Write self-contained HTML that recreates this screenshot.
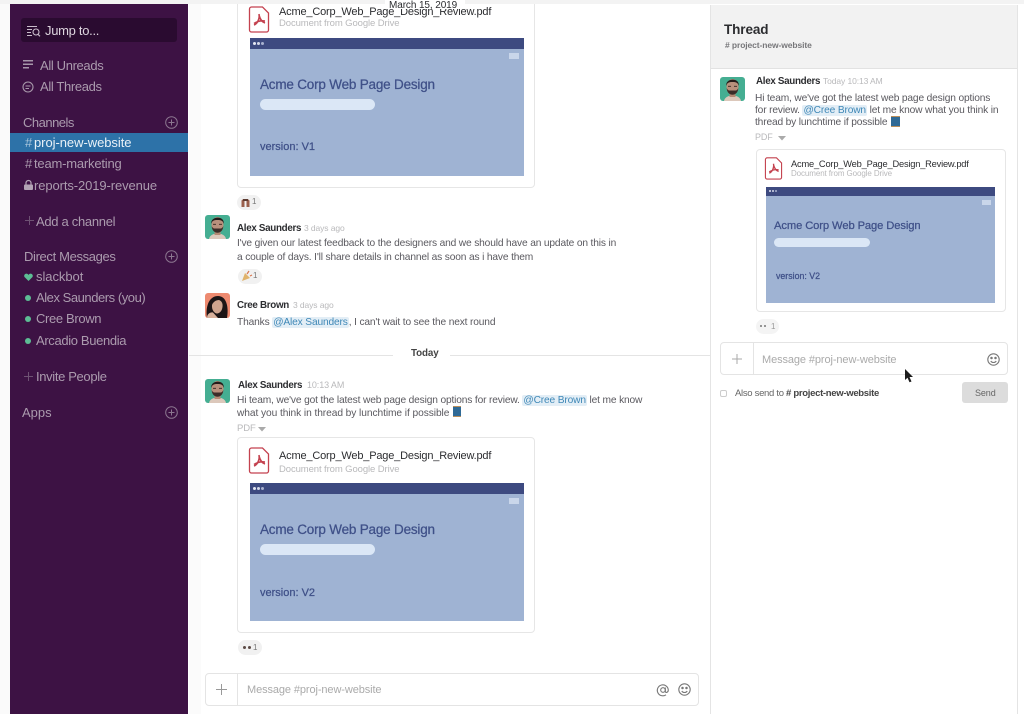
<!DOCTYPE html>
<html lang="en"><head><meta charset="utf-8"><title>Thread</title>
<style>
html,body{margin:0;padding:0;background:#fff}
body{width:1024px;height:714px;overflow:hidden;position:relative;font-family:"Liberation Sans",sans-serif;filter:blur(.3px)}
.a,.t{position:absolute}
.t{white-space:nowrap;line-height:1;font-size:11.5px;color:#5a595f;letter-spacing:-.1px}
.s{color:#ab9bae;font-size:13px;letter-spacing:-.35px}
.b{font-weight:700;color:#2c2d30;font-size:9.8px;letter-spacing:-.3px}
.g{color:#b9b9bb;font-size:9.5px}
.ms{font-size:10.2px;letter-spacing:-.15px}
.ti{font-size:11px;letter-spacing:-.18px;color:#2c2d30}
.m{background:#e3eef6;color:#3f88b7;border-radius:2px;padding:0 1px}
.card{position:absolute;background:#fff;border:1px solid #e6e6e6;border-radius:4px;box-sizing:border-box}
.pv{position:absolute;background:#9fb3d3}
.bar{position:absolute;left:0;right:0;top:0;background:#3d4a80}
.h{position:absolute;color:#3f5088;font-weight:400;white-space:nowrap;line-height:1;-webkit-text-stroke:.25px #3f5088}
.pill{position:absolute;background:#dbe7f6;border-radius:6px}
.re{position:absolute;background:#f1f1f1;border-radius:8px;height:15px}
.dot{position:absolute;width:6px;height:6px;border-radius:50%;background:#5dbd95}
svg{position:absolute;overflow:visible}
</style></head><body>
<svg width="0" height="0" style="position:absolute"><defs>
<g id="alex"><rect width="25" height="24" rx="3" fill="#45ae92"/><path d="M4 24c.5-3 3-4.500 5-5h7c2 .5 4.500 2 5 5z" fill="#dcc8bb"/><rect x="9.500" y="15" width="6" height="5" fill="#b58a74"/><ellipse cx="12.500" cy="10" rx="6" ry="8" fill="#b8907c"/><path d="M6.300 9C5 1 20 0 18.700 9 18 5.500 16 5 12.500 5S7 5.500 6.300 9z" fill="#241c1a"/><path d="M6.700 11c.3 9 11.300 9 11.600 0-1 2.500-2.500 2.500-3 2.500h-5.600c-.5 0-2 0-3-2.500z" fill="#3b2d28"/><path d="M8 9.300h3M14 9.300h3" stroke="#33261f" stroke-width=".9"/></g>
<g id="cree"><rect width="25" height="25" rx="3" fill="#ed8a70"/><path d="M2 25C0 12 5 3 13 3c8 0 11 10 9 22z" fill="#1c1516"/><path d="M7 12c1-3 4-5 7-5 3 1 4 4 3.500 7-.5 4-3 6.500-5.500 6.500S6.500 17 7 12z" fill="#cfa48e"/><path d="M2 25c0-4 3-6 6-5.500l5 5.500z" fill="#d9b19c"/></g>
<g id="pdf"><path d="M2.500 1h11l6 6v17a2 2 0 0 1-2 2H2.500a2 2 0 0 1-2-2V3a2 2 0 0 1 2-2z" fill="#fff" stroke="#c4424f" stroke-width="1.300"/><path d="M5 19c3-1 6-6 5-11M10 9c1 4 3 7 6 8M5 17.500c3-2 7-3 11-2.500" fill="none" stroke="#c4424f" stroke-width="1.600"/></g>
</defs></svg>

<!-- page chrome -->
<div class="a" style="left:0;top:4px;width:10px;height:710px;background:#fafafa"></div>
<div class="a" style="left:189px;top:4px;width:12px;height:710px;background:#fbfbfb"></div>

<!-- top card -->
<div class="card" style="left:237px;top:-20px;width:298px;height:208px"></div>
<svg style="left:249px;top:6px" width="20" height="24"><use href="#pdf"/></svg>
<div class="t ti" style="left:279px;top:7px">Acme_Corp_Web_Page_Design_Review.pdf</div>
<div class="t g" style="left:279px;top:19px">Document from Google Drive</div>
<div class="pv" style="left:250px;top:38px;width:274px;height:138px"><div class="bar" style="height:11px"></div>
<div class="a" style="left:3px;top:4px;width:3px;height:3px;border-radius:50%;background:#e5e8f2;box-shadow:4px 0 #d5d9e8,8px 0 #a9b2cf"></div>
<div class="a" style="left:259px;top:15px;width:10px;height:6px;background:#c9d6ea"></div>
<div class="h" style="left:10px;top:40px;font-size:13.500px;letter-spacing:-.2px">Acme Corp Web Page Design</div>
<div class="pill" style="left:10px;top:61px;width:115px;height:11px"></div>
<div class="h" style="left:10px;top:104px;font-size:11px">version: V1</div></div>

<div class="a" style="left:0;top:0;width:1024px;height:4px;background:#f3f3f3"></div>
<div class="a" style="left:385px;top:0;width:80px;height:9px;background:#fff;overflow:hidden"><div class="t" style="left:4px;top:1px;font-size:10px;color:#2c2d30">March 15, 2019</div></div>

<!-- sidebar -->
<div class="a" style="left:10px;top:4px;width:178px;height:710px;background:#3d1244"></div>
<div class="a" style="left:21px;top:18px;width:156px;height:24px;background:#2a0b30;border-radius:3px"></div>
<svg style="left:26px;top:25px" width="16" height="12" fill="none" stroke="#c9bdcb" stroke-width="1.100"><path d="M1 1.500h10M1 4.500h5M1 7.500h4M1 10.500h5"/><circle cx="10" cy="7" r="3"/><path d="M12 9.300l2 2"/></svg>
<div class="t" style="left:45px;top:24px;font-size:13px;color:#ddd5de;letter-spacing:-.3px">Jump to...</div>

<svg style="left:23px;top:60px" width="11" height="9" fill="#a797aa"><rect width="10" height="1.500"/><rect y="3.500" width="10" height="1.500"/><rect y="7" width="6" height="1.500"/></svg>
<div class="t s" style="left:40px;top:59px">All Unreads</div>
<svg style="left:22px;top:81px" width="13" height="12" fill="none" stroke="#a797aa" stroke-width="1.100"><circle cx="6" cy="6" r="5"/><path d="M3.500 5h5M3.500 7.500h3.500"/></svg>
<div class="t s" style="left:40px;top:80px">All Threads</div>

<div class="t s" style="left:23px;top:116px;letter-spacing:-.5px">Channels</div>
<svg style="left:165px;top:116px" width="13" height="13" fill="none" stroke="#8c7790" stroke-width="1"><circle cx="6.500" cy="6.500" r="5.800"/><path d="M6.500 3.500v6M3.500 6.500h6"/></svg>
<div class="a" style="left:10px;top:133px;width:178px;height:19px;background:#2d72a8"></div>
<div class="t s" style="left:25px;top:136px;color:#a9c6dc">#</div>
<div class="t s" style="left:34px;top:136px;color:#e9f1f7;letter-spacing:-.05px">proj-new-website</div>
<div class="t s" style="left:25px;top:157px">#</div>
<div class="t s" style="left:34px;top:157px;letter-spacing:-.2px">team-marketing</div>
<svg style="left:24px;top:180px" width="9" height="10"><path d="M2 4.500V3a2.500 2.500 0 0 1 5 0v1.500" fill="none" stroke="#b3a3b5" stroke-width="1.200"/><rect y="4.500" width="9" height="5.500" rx="1" fill="#b3a3b5"/></svg>
<div class="t s" style="left:34px;top:179px;letter-spacing:-.1px">reports-2019-revenue</div>
<svg style="left:25px;top:216px" width="9" height="9" stroke="#6e5273" stroke-width="1"><path d="M4.500 0v9M0 4.500h9"/></svg>
<div class="t s" style="left:36px;top:215px;letter-spacing:-.3px">Add a channel</div>

<div class="t s" style="left:24px;top:250px">Direct Messages</div>
<svg style="left:165px;top:250px" width="13" height="13" fill="none" stroke="#8c7790" stroke-width="1"><circle cx="6.500" cy="6.500" r="5.800"/><path d="M6.500 3.500v6M3.500 6.500h6"/></svg>
<svg style="left:24px;top:273px" width="9" height="8"><path d="M4.500 8L.5 4C-1 1.500 3 -1 4.500 2 6 -1 10 1.500 8.500 4z" fill="#5dbd95"/></svg>
<div class="t s" style="left:36px;top:270px;letter-spacing:-.05px">slackbot</div>
<div class="dot" style="left:25px;top:295px"></div>
<div class="t s" style="left:36px;top:291px;letter-spacing:-.45px">Alex Saunders (you)</div>
<div class="dot" style="left:25px;top:316px"></div>
<div class="t s" style="left:36px;top:312px">Cree Brown</div>
<div class="dot" style="left:25px;top:338px"></div>
<div class="t s" style="left:36px;top:334px">Arcadio Buendia</div>
<svg style="left:24px;top:372px" width="9" height="9" stroke="#6e5273" stroke-width="1"><path d="M4.500 0v9M0 4.500h9"/></svg>
<div class="t s" style="left:36px;top:370px">Invite People</div>
<div class="t s" style="left:22px;top:406px;letter-spacing:0">Apps</div>
<svg style="left:165px;top:406px" width="13" height="13" fill="none" stroke="#8c7790" stroke-width="1"><circle cx="6.500" cy="6.500" r="5.800"/><path d="M6.500 3.500v6M3.500 6.500h6"/></svg>

<!-- reaction 1 -->
<div class="re" style="left:237px;top:195px;width:24px"></div>
<svg style="left:241px;top:198px" width="10" height="9"><path d="M.5 9V3c0-2 3-2 3 0v6zM5.500 9V3c0-2 3-2 3 0v6z" fill="#9a5f4c"/><path d="M2 1h5v2H2z" fill="#5c3a30"/></svg>
<div class="t" style="left:252px;top:198px;font-size:8px;color:#777">1</div>

<!-- Alex msg -->
<svg style="left:205px;top:215px" width="25" height="24"><use href="#alex"/></svg>
<div class="t b" style="left:237px;top:224px">Alex Saunders</div>
<div class="t g" style="left:304px;top:224px;font-size:8.500px">3 days ago</div>
<div class="t ms" style="left:237px;top:239px">I've given our latest feedback to the designers and we should have an update on this in</div>
<div class="t ms" style="left:237px;top:253px">a couple of days. I'll share details in channel as soon as i have them</div>
<div class="re" style="left:238px;top:269px;width:24px"></div>
<svg style="left:242px;top:271px" width="10" height="10"><path d="M0 10l3-8 5 5z" fill="#e0b36c"/><path d="M5 3l2-3M8 5l2-1" stroke="#d9764f" stroke-width="1.200"/></svg>
<div class="t" style="left:253px;top:272px;font-size:8px;color:#777">1</div>

<!-- Cree msg -->
<svg style="left:205px;top:293px" width="25" height="25"><use href="#cree"/></svg>
<div class="t b" style="left:237px;top:301px">Cree Brown</div>
<div class="t g" style="left:293px;top:301px;font-size:8.500px">3 days ago</div>
<div class="t ms" style="left:237px;top:318px">Thanks <span class="m">@Alex Saunders</span>, I can't wait to see the next round</div>

<!-- Today -->
<div class="a" style="left:189px;top:355px;width:204px;height:1px;background:#e4e4e4"></div>
<div class="a" style="left:450px;top:355px;width:260px;height:1px;background:#e4e4e4"></div>
<div class="t b" style="left:411px;top:349px;font-size:9.800px;color:#444;letter-spacing:-.1px">Today</div>

<!-- Alex today -->
<svg style="left:205px;top:379px" width="25" height="24"><use href="#alex"/></svg>
<div class="t b" style="left:238px;top:381px">Alex Saunders</div>
<div class="t g" style="left:307px;top:381px;font-size:9px">10:13 AM</div>
<div class="t ms" style="left:237px;top:396px">Hi team, we've got the latest web page design options for review. <span class="m">@Cree Brown</span> let me know</div>
<div class="t ms" style="left:237px;top:409px;letter-spacing:-.07px">what you think in thread by lunchtime if possible</div>
<div class="a" style="left:453px;top:406px;width:8px;height:11px;background:#2f6a96;border-top:1.500px solid #b98f5c;border-bottom:1.500px solid #b98f5c;box-sizing:border-box"></div>
<div class="t g" style="left:237px;top:424px">PDF</div>
<svg style="left:258px;top:427px" width="8" height="5"><path d="M0 0h8L4 4.500z" fill="#aaa"/></svg>

<div class="card" style="left:237px;top:437px;width:298px;height:196px"></div>
<svg style="left:249px;top:447px" width="20" height="26"><use href="#pdf"/></svg>
<div class="t ti" style="left:279px;top:451px">Acme_Corp_Web_Page_Design_Review.pdf</div>
<div class="t g" style="left:279px;top:465px">Document from Google Drive</div>
<div class="pv" style="left:250px;top:483px;width:274px;height:138px"><div class="bar" style="height:11px"></div>
<div class="a" style="left:3px;top:4px;width:3px;height:3px;border-radius:50%;background:#e5e8f2;box-shadow:4px 0 #d5d9e8,8px 0 #a9b2cf"></div>
<div class="a" style="left:259px;top:15px;width:10px;height:6px;background:#c9d6ea"></div>
<div class="h" style="left:10px;top:40px;font-size:13.500px;letter-spacing:-.2px">Acme Corp Web Page Design</div>
<div class="pill" style="left:10px;top:61px;width:115px;height:11px"></div>
<div class="h" style="left:10px;top:105px;font-size:11px">version: V2</div></div>

<div class="re" style="left:238px;top:640px;width:24px"></div>
<div class="a" style="left:243px;top:646px;width:3px;height:3px;border-radius:50%;background:#5b4a45;box-shadow:5px 0 #5b4a45"></div>
<div class="t" style="left:253px;top:644px;font-size:8px;color:#777">1</div>

<!-- main composer -->
<div class="a" style="left:205px;top:673px;width:494px;height:33px;border:1px solid #e4e4e4;border-radius:4px;box-sizing:border-box;background:#fff"></div>
<div class="a" style="left:237px;top:673px;width:1px;height:33px;background:#e4e4e4"></div>
<svg style="left:216px;top:684px" width="11" height="11" stroke="#999" stroke-width="1"><path d="M5.500 0v11M0 5.500h11"/></svg>
<div class="t" style="left:247px;top:685px;font-size:11px;color:#aaa">Message #proj-new-website</div>
<svg style="left:657px;top:684px" width="12" height="12" fill="none" stroke="#777" stroke-width="1.100"><circle cx="6" cy="6" r="2.300"/><path d="M8.300 3.500v3.700c0 2 3 1.500 3-1.200A5.500 5.500 0 1 0 9 10.800"/></svg>
<svg style="left:678px;top:683px" width="13" height="13" fill="none" stroke="#777" stroke-width="1.100"><circle cx="6.500" cy="6.500" r="5.700"/><circle cx="4.500" cy="5" r=".7" fill="#777"/><circle cx="8.500" cy="5" r=".7" fill="#777"/><path d="M3.800 8c1 2 4.400 2 5.400 0"/></svg>

<!-- thread -->
<div class="a" style="left:710px;top:5px;width:1px;height:709px;background:#e4e4e4"></div>
<div class="a" style="left:1017px;top:5px;width:1px;height:709px;background:#e4e4e4"></div>
<div class="a" style="left:711px;top:5px;width:306px;height:63px;background:#f2f2f2;border-bottom:1px solid #e2e2e2"></div>
<div class="t" style="left:724px;top:23px;font-size:13.500px;font-weight:700;color:#2c2d30">Thread</div>
<div class="t" style="left:725px;top:41px;font-size:8.500px;font-weight:700;color:#77777a">#&nbsp;project-new-website</div>

<svg style="left:720px;top:77px" width="25" height="24"><use href="#alex"/></svg>
<div class="t b" style="left:756px;top:77px">Alex Saunders</div>
<div class="t g" style="left:823px;top:77px;font-size:8.500px">Today 10:13 AM</div>
<div class="t ms" style="left:755px;top:94px">Hi team, we've got the latest web page design options</div>
<div class="t ms" style="left:755px;top:106px">for review. <span class="m">@Cree Brown</span> let me know what you think in</div>
<div class="a" style="left:755px;top:116px;width:150px;height:11px;overflow:hidden"><div class="t ms" style="left:0;top:2px">thread by lunchtime if possible</div></div>
<div class="a" style="left:891px;top:116px;width:9px;height:11px;background:#2f6a96;border-top:1.500px solid #b98f5c;border-bottom:1.500px solid #b98f5c;box-sizing:border-box"></div>
<div class="t g" style="left:755px;top:133px;font-size:9px">PDF</div>
<svg style="left:778px;top:136px" width="8" height="5"><path d="M0 0h8L4 4.500z" fill="#aaa"/></svg>

<div class="card" style="left:756px;top:149px;width:250px;height:163px"></div>
<svg style="left:765px;top:157px" width="17" height="22"><use href="#pdf" transform="scale(.85)"/></svg>
<div class="t" style="left:791px;top:160px;font-size:9.300px;letter-spacing:-.2px;color:#2c2d30">Acme_Corp_Web_Page_Design_Review.pdf</div>
<div class="t g" style="left:791px;top:170px;font-size:8px">Document from Google Drive</div>
<div class="pv" style="left:766px;top:187px;width:229px;height:116px"><div class="bar" style="height:9px"></div>
<div class="a" style="left:3px;top:3px;width:2px;height:2px;border-radius:50%;background:#e5e8f2;box-shadow:3px 0 #d5d9e8,6px 0 #a9b2cf"></div>
<div class="a" style="left:216px;top:13px;width:9px;height:5px;background:#c9d6ea"></div>
<div class="h" style="left:8px;top:34px;font-size:11.200px;letter-spacing:-.1px">Acme Corp Web Page Design</div>
<div class="pill" style="left:8px;top:51px;width:96px;height:9px"></div>
<div class="h" style="left:10px;top:85px;font-size:8.800px">version: V2</div></div>

<div class="re" style="left:756px;top:319px;width:23px;background:#f4f4f4"></div>
<div class="a" style="left:760px;top:325px;width:2px;height:2px;border-radius:50%;background:#777;box-shadow:4px 0 #777"></div>
<div class="t" style="left:771px;top:323px;font-size:8px;color:#999">1</div>

<div class="a" style="left:720px;top:342px;width:288px;height:33px;border:1px solid #e4e4e4;border-radius:4px;box-sizing:border-box;background:#fff"></div>
<div class="a" style="left:753px;top:342px;width:1px;height:33px;background:#e4e4e4"></div>
<svg style="left:732px;top:354px" width="10" height="10" stroke="#aaa" stroke-width="1"><path d="M5 0v10M0 5h10"/></svg>
<div class="t" style="left:762px;top:355px;font-size:11px;color:#aaa">Message #proj-new-website</div>
<svg style="left:987px;top:353px" width="13" height="13" fill="none" stroke="#777" stroke-width="1.100"><circle cx="6.500" cy="6.500" r="5.700"/><circle cx="4.500" cy="5" r=".7" fill="#777"/><circle cx="8.500" cy="5" r=".7" fill="#777"/><path d="M3.800 8c1 2 4.400 2 5.400 0"/></svg>
<svg style="left:905px;top:369px" width="9" height="14"><path d="M0 0v11l2.500-2.200 2 4.500 2-.8-2-4.500H8z" fill="#1c1c1c"/></svg>

<div class="a" style="left:720px;top:390px;width:7px;height:7px;border:1px solid #ccc;border-radius:2px;box-sizing:border-box"></div>
<div class="t" style="left:735px;top:389px;font-size:9.500px;color:#666;letter-spacing:-.3px">Also send to <b style="color:#444">#&nbsp;project-new-website</b></div>
<div class="a" style="left:962px;top:382px;width:46px;height:21px;background:#dcdcdc;border-radius:3px"></div>
<div class="t" style="left:975px;top:389px;font-size:9px;color:#666">Send</div>
</body></html>
